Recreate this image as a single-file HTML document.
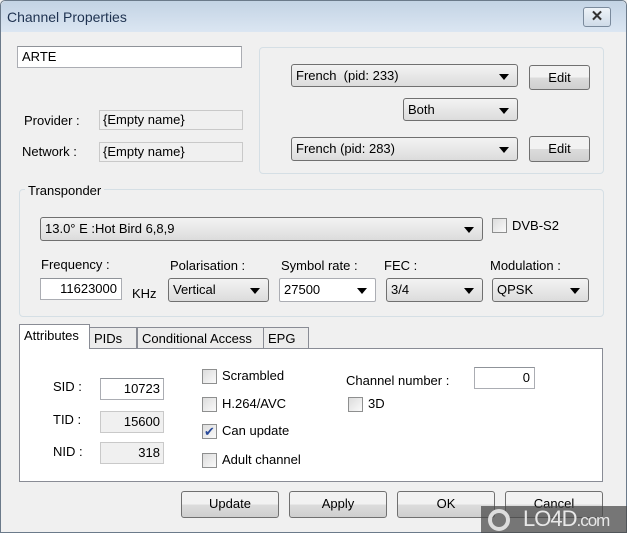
<!DOCTYPE html>
<html><head><style>
*{box-sizing:border-box;margin:0;padding:0}
body{width:627px;height:533px;overflow:hidden;background:#f0f0f0;font-family:"Liberation Sans",sans-serif;font-size:13px;color:#000;position:relative}
.a{position:absolute}
.frame{left:0;top:0;width:627px;height:533px;border:1px solid #6b7a8a;border-radius:5px 5px 0 0}
.title{left:1px;top:1px;width:625px;height:31px;background:linear-gradient(#c3d3e4,#dbe6f2);border-radius:5px 5px 0 0}
.inp{background:#fff;border:1px solid #abadb3;border-top-color:#8f9399;padding:2px 4px;line-height:16px}
.ro{background:#f0f0f0;border:1px solid #c9c9c9;padding:1px 3px}
.cb{background:linear-gradient(#f3f3f3,#dcdcdc);border:1px solid #707070;border-radius:3px;padding:3px 4px;line-height:15px}
.cb.w{background:#fff;border-color:#abadb3;border-radius:2px}
.cb:after{content:"";position:absolute;right:8px;top:9px;border-left:5px solid transparent;border-right:5px solid transparent;border-top:6px solid #000}
.btn{background:linear-gradient(#f2f2f2 50%,#dcdcdc 50%,#cfcfcf);border:1px solid #707070;border-radius:3px;text-align:center;line-height:24px}
.grp{border:1px solid #d5dfe5;border-radius:4px}
.chk{width:15px;height:15px;border:1px solid #8e8f8f;background:linear-gradient(135deg,#dcdcdc,#fafafa)}
.tab{border:1px solid #898c95;border-bottom:none;background:#ececec;height:23px;line-height:21px;padding-left:4px}
.r{text-align:right}
</style></head><body>
<div class="a frame"></div>
<div class="a title"></div>
<div class="a" style="left:7px;top:9px;font-size:14px;color:#1e3250">Channel Properties</div>
<div class="a" style="left:583px;top:7px;width:28px;height:20px;border:1px solid #7a8a9c;border-radius:3px;background:linear-gradient(#eef3f8,#cfdbe8);text-align:center;font-size:15px;line-height:17px;color:#333;font-weight:bold">✕</div>

<div class="a inp" style="left:17px;top:46px;width:225px;height:22px">ARTE</div>
<div class="a" style="left:24px;top:113px">Provider :</div>
<div class="a ro" style="left:99px;top:110px;width:144px;height:20px">{Empty name}</div>
<div class="a" style="left:22px;top:144px">Network :</div>
<div class="a ro" style="left:99px;top:142px;width:144px;height:20px">{Empty name}</div>

<div class="a grp" style="left:259px;top:47px;width:345px;height:127px"></div>
<div class="a cb" style="left:291px;top:64px;width:227px;height:23px">French&nbsp; (pid: 233)</div>
<div class="a btn" style="left:529px;top:65px;width:61px;height:25px">Edit</div>
<div class="a cb" style="left:403px;top:98px;width:115px;height:23px">Both</div>
<div class="a cb" style="left:291px;top:137px;width:227px;height:24px">French (pid: 283)</div>
<div class="a btn" style="left:529px;top:136px;width:61px;height:26px">Edit</div>

<div class="a grp" style="left:19px;top:189px;width:585px;height:128px"></div>
<div class="a" style="left:25px;top:183px;background:#f0f0f0;padding:0 3px">Transponder</div>
<div class="a cb" style="left:40px;top:217px;width:443px;height:24px">13.0° E :Hot Bird 6,8,9</div>
<div class="a chk" style="left:492px;top:218px"></div>
<div class="a" style="left:512px;top:218px">DVB-S2</div>
<div class="a" style="left:41px;top:257px">Frequency :</div>
<div class="a" style="left:170px;top:258px">Polarisation :</div>
<div class="a" style="left:281px;top:258px">Symbol rate :</div>
<div class="a" style="left:384px;top:258px">FEC :</div>
<div class="a" style="left:490px;top:258px">Modulation :</div>
<div class="a inp r" style="left:40px;top:278px;width:82px;height:22px">11623000</div>
<div class="a" style="left:132px;top:286px">KHz</div>
<div class="a cb" style="left:168px;top:278px;width:101px;height:24px">Vertical</div>
<div class="a cb w" style="left:279px;top:278px;width:97px;height:24px">27500</div>
<div class="a cb" style="left:386px;top:278px;width:97px;height:24px">3/4</div>
<div class="a cb" style="left:492px;top:278px;width:97px;height:24px">QPSK</div>

<div class="a" style="left:19px;top:348px;width:584px;height:134px;background:#fff;border:1px solid #898c95"></div>
<div class="a tab" style="left:19px;top:324px;width:71px;height:25px;background:#fff;line-height:22px">Attributes</div>
<div class="a tab" style="left:89px;top:327px;width:48px;height:21px">PIDs</div>
<div class="a tab" style="left:137px;top:327px;width:127px;height:21px">Conditional Access</div>
<div class="a tab" style="left:263px;top:327px;width:46px;height:21px">EPG</div>

<div class="a" style="left:53px;top:379px">SID :</div>
<div class="a inp r" style="left:100px;top:378px;width:64px;height:22px;padding:2px 3px">10723</div>
<div class="a" style="left:53px;top:412px">TID :</div>
<div class="a ro r" style="left:100px;top:411px;width:64px;height:22px;padding:2px 3px">15600</div>
<div class="a" style="left:53px;top:444px">NID :</div>
<div class="a ro r" style="left:100px;top:442px;width:64px;height:22px;padding:2px 3px">318</div>

<div class="a chk" style="left:202px;top:369px"></div><div class="a" style="left:222px;top:368px">Scrambled</div>
<div class="a chk" style="left:202px;top:397px"></div><div class="a" style="left:222px;top:396px">H.264/AVC</div>
<div class="a chk" style="left:202px;top:424px;font-size:13px;line-height:13px;color:#2a4a9a;text-align:center">✔</div><div class="a" style="left:222px;top:423px">Can update</div>
<div class="a chk" style="left:202px;top:453px"></div><div class="a" style="left:222px;top:452px">Adult channel</div>
<div class="a" style="left:346px;top:373px">Channel number :</div>
<div class="a inp r" style="left:474px;top:367px;width:61px;height:22px">0</div>
<div class="a chk" style="left:348px;top:397px"></div><div class="a" style="left:368px;top:396px">3D</div>

<div class="a btn" style="left:181px;top:491px;width:98px;height:27px">Update</div>
<div class="a btn" style="left:289px;top:491px;width:98px;height:27px">Apply</div>
<div class="a btn" style="left:397px;top:491px;width:98px;height:27px">OK</div>
<div class="a btn" style="left:505px;top:491px;width:98px;height:27px">Cancel</div>

<div class="a" style="left:481px;top:506px;width:146px;height:27px;background:rgba(70,70,70,0.72)"></div>
<div class="a" style="left:488px;top:509px;width:22px;height:22px;border-radius:50%;border:4px solid #ddd"></div>
<div class="a" style="left:523px;top:506px;font-size:22px;color:#e8e8e8;letter-spacing:-1px">LO4D<span style="font-size:17px">.com</span></div>
</body></html>
